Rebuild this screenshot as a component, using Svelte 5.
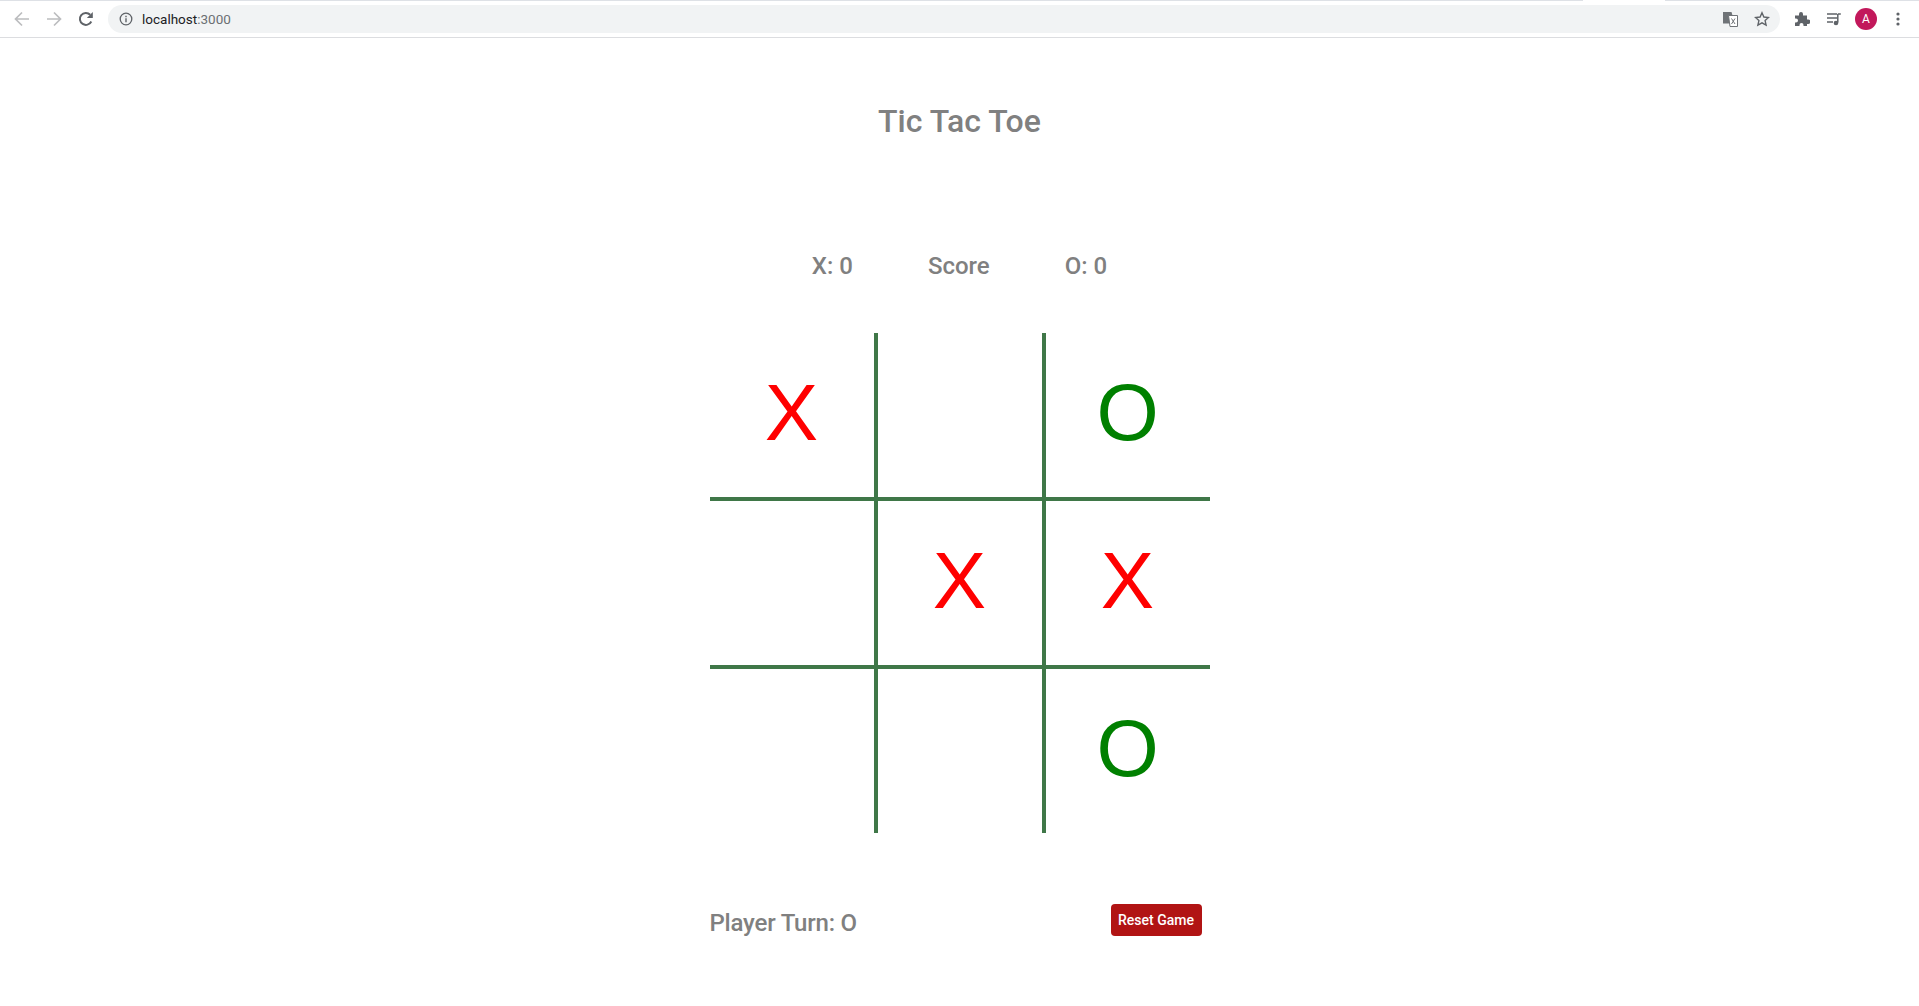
<script>
  let board = ['X', '', 'O', '', 'X', 'X', '', '', 'O']
  let score = { x: 0, o: 0 }
  let turn = 'O'
</script>

<div class="page">
  <div class="tabstrip"></div>
  <header class="chrome">
    <div class="nav">
      <svg width="16" height="16" viewBox="0 0 16 16"><path d="M15 8H2.500M8 1.500 1.500 8 8 14.500" fill="none" stroke="#bcbdbf" stroke-width="1.700"/></svg>
      <svg width="16" height="16" viewBox="0 0 16 16"><path d="M1 8h12.500M8 1.500 14.500 8 8 14.500" fill="none" stroke="#bcbdbf" stroke-width="1.700"/></svg>
      <svg width="16" height="16" viewBox="0 0 16 16"><path d="M13.300 10.500A6 6 0 1 1 12.200 3.700" fill="none" stroke="#5f6368" stroke-width="2"/><path d="M14.800 1v6h-6z" fill="#5f6368"/></svg>
    </div>
    <div class="omnibox">
      <svg width="14" height="14" viewBox="0 0 14 14"><circle cx="7" cy="7" r="5.800" fill="none" stroke="#5f6368" stroke-width="1.300"/><path d="M7 6.200v4M7 3.800v1.400" stroke="#5f6368" stroke-width="1.400"/></svg>
      <span class="url">localhost<span class="port">:3000</span></span>
      <div class="omni-right">
        <svg width="16" height="16" viewBox="0 0 16 16"><path d="M1 1h8.500l1 3.500v8H1z" fill="#6f7377"/><path d="M6.500 4.500H15.500V15.500H8z" fill="#fff" stroke="#6f7377"/><path d="M9.500 7.500l3.500 5.500M13 7.500l-3.500 5.500" stroke="#6f7377"/></svg>
        <svg width="16" height="16" viewBox="0 0 16 16"><path d="M8 1.800l1.900 4.200 4.600.5-3.400 3.100 1 4.500L8 11.800l-4.100 2.300 1-4.500L1.500 6.500l4.600-.5z" fill="none" stroke="#5f6368" stroke-width="1.400"/></svg>
      </div>
    </div>
    <div class="tools">
      <svg width="16" height="16" viewBox="0 0 16 16"><path d="M1 4.500h4V3a2 2 0 0 1 4 0v1.500h4v4h1.200a2.200 2.200 0 0 1 0 4.400H13V15H9.500v-1a2 2 0 0 0-4 0v1H1v-3.500h1a2 2 0 0 0 0-4H1z" fill="#5f6368"/></svg>
      <svg width="16" height="16" viewBox="0 0 16 16"><path d="M1 3h10M1 7h10M1 11h6" stroke="#5f6368" stroke-width="1.500"/><path d="M11.800 3v8.500" stroke="#5f6368" stroke-width="1.500"/><path d="M11.800 3h3" stroke="#5f6368" stroke-width="1.500"/><circle cx="10" cy="12" r="2.300" fill="#5f6368"/></svg>
      <span class="avatar">A</span>
      <svg width="4" height="16" viewBox="0 0 4 16"><circle cx="2" cy="3" r="1.600" fill="#5f6368"/><circle cx="2" cy="8" r="1.600" fill="#5f6368"/><circle cx="2" cy="13" r="1.600" fill="#5f6368"/></svg>
    </div>
  </header>

  <main class="game">
    <h1>Tic Tac Toe</h1>

    <div class="score">
      <span>X: {score.x}</span>
      <span>Score</span>
      <span>O: {score.o}</span>
    </div>

    <div class="board">
      {#each board as cell}
        <div class="cell {cell === 'X' ? 'x' : 'o'}">{cell}</div>
      {/each}
    </div>

    <div class="footer">
      <span class="turn">Player Turn: {turn}</span>
      <button>Reset Game</button>
    </div>
  </main>
</div>

<style>
  :global(body) {
    background: #fff;
  }

  .page {
    font-family: Roboto, sans-serif;
  }

  .tabstrip {
    height: 1px;
    background: linear-gradient(to right, #dee1e6 1583px, #fff 1583px, #fff 1665px, #dee1e6 1665px);
  }

  .chrome {
    display: flex;
    align-items: center;
    height: 36px;
    background: #fff;
    border-bottom: 1px solid #dcdde0;
    padding-left: 14px;
  }

  .nav {
    display: flex;
    align-items: center;
    gap: 16px;
    width: 94px;
  }

  .omnibox {
    display: flex;
    align-items: center;
    width: 1672px;
    height: 28px;
    background: #f1f3f4;
    border-radius: 14px;
    padding-left: 11px;
    box-sizing: border-box;
  }

  .url {
    margin-left: 9px;
    font-size: 13.500px;
    color: #202124;
  }

  .port {
    color: #6b6f73;
  }

  .omni-right {
    display: flex;
    align-items: center;
    gap: 16px;
    margin-left: auto;
    margin-right: 10px;
  }

  .tools {
    display: flex;
    align-items: center;
    margin-left: 14px;
    gap: 16px;
  }

  .avatar {
    display: flex;
    align-items: center;
    justify-content: center;
    width: 22px;
    height: 22px;
    margin: 0 3px 0 -3px;
    border-radius: 50%;
    background: #c2185b;
    color: #fff;
    font-size: 12px;
  }

  .game {
    display: flex;
    flex-direction: column;
    align-items: center;
    color: #808080;
    font-weight: 500;
  }

  h1 {
    margin: 63px 0 0;
    font-size: 32px;
    font-weight: 500;
    line-height: 40px;
  }

  .score {
    display: flex;
    gap: 75px;
    margin-top: 109px;
    font-size: 24px;
    line-height: 32px;
  }

  .board {
    display: grid;
    grid-template-columns: 168px 168px 164px;
    grid-template-rows: 168px 168px 164px;
    width: 500px;
    margin-top: 51px;
  }

  .cell {
    display: flex;
    align-items: center;
    justify-content: center;
    padding-bottom: 4px;
    font-family: "Liberation Sans", sans-serif;
    font-size: 80px;
    font-weight: 400;
    border-right: 4px solid #3f7748;
    border-bottom: 4px solid #3f7748;
  }

  .cell:nth-child(3n) {
    border-right: 0;
  }

  .cell:nth-child(n + 7) {
    border-bottom: 0;
  }

  .x {
    color: #f00;
  }

  .o {
    color: #008000;
  }

  .footer {
    display: flex;
    justify-content: space-between;
    align-items: center;
    box-sizing: border-box;
    width: 500px;
    padding-right: 8px;
    margin-top: 69px;
    font-size: 24px;
  }

  .turn {
    margin-top: 7px;
    letter-spacing: -0.2px;
  }

  button {
    width: 91px;
    height: 32px;
    padding: 0;
    border: 0;
    border-radius: 4px;
    background: #b11414;
    color: #fff;
    font-family: Roboto, sans-serif;
    font-size: 14px;
    font-weight: 500;
  }
</style>
